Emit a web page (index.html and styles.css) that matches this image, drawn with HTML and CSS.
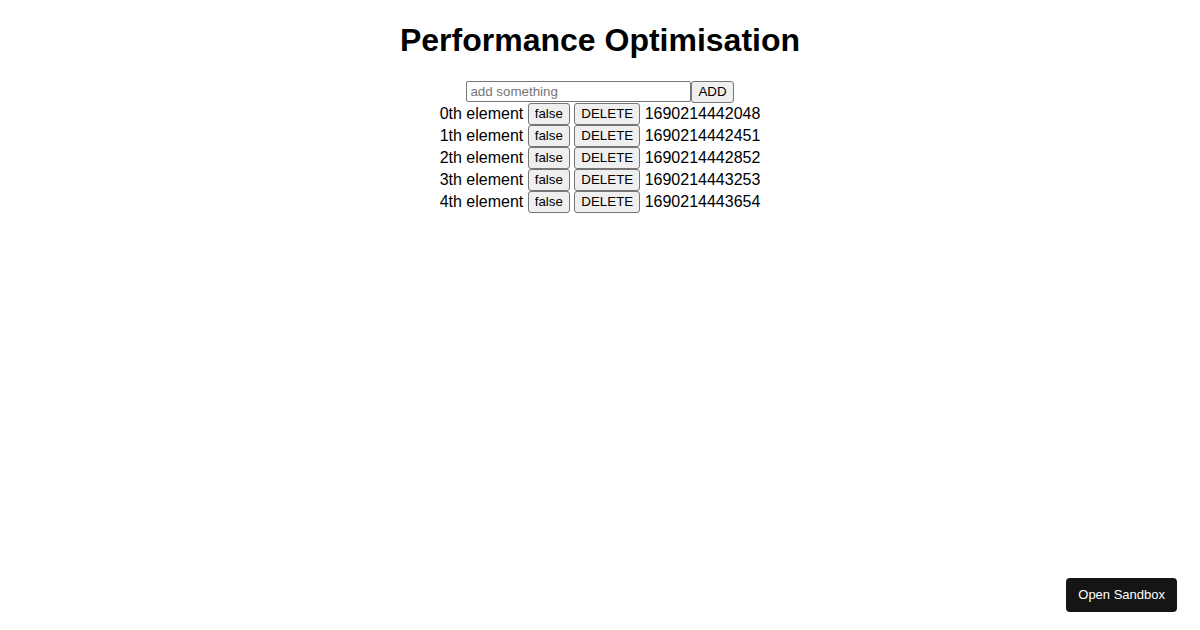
FILE: index.html
```html
<!DOCTYPE html>
<html>
<head>
<meta charset="utf-8">
<link rel="stylesheet" href="styles.css">
</head>
<body class="page">
<div class="app">
  <h1 class="title">Performance Optimisation</h1>
  <div class="adder"><input class="field" type="text" placeholder="add something"><button class="btn">ADD</button></div>
  <div class="row">0th element <button class="btn">false</button> <button class="btn">DELETE</button> 1690214442048</div>
  <div class="row">1th element <button class="btn">false</button> <button class="btn">DELETE</button> 1690214442451</div>
  <div class="row">2th element <button class="btn">false</button> <button class="btn">DELETE</button> 1690214442852</div>
  <div class="row">3th element <button class="btn">false</button> <button class="btn">DELETE</button> 1690214443253</div>
  <div class="row">4th element <button class="btn">false</button> <button class="btn">DELETE</button> 1690214443654</div>
</div>
<a class="sandbox">Open Sandbox</a>
</body>
</html>
```
FILE: styles.css
```css
.page {
  margin: 0;
  background: #fff;
  font-family: "Liberation Sans", Arial, sans-serif;
  color: #000;
}
.app {
  text-align: center;
  font-family: "Liberation Sans", Arial, sans-serif;
  font-size: 16px;
}
.title {
  font-size: 32px;
  font-weight: bold;
  margin: 22.44px 0 22px;
}
.adder {
  height: 22px;
}
.row {
  height: 22px;
  line-height: 22px;
}
.field {
  box-sizing: border-box;
  width: 225px;
  height: 21px;
  padding: 1px 3px;
  border: 1px solid #767676;
  border-radius: 2px;
  font-family: "Liberation Sans", Arial, sans-serif;
  font-size: 13.33px;
  vertical-align: top;
}
.field::placeholder {
  color: #757575;
}
.btn {
  box-sizing: border-box;
  height: 22px;
  padding: 0 6px;
  border: 1px solid #767676;
  border-radius: 3px;
  background: #efefef;
  color: #000;
  font-family: "Liberation Sans", Arial, sans-serif;
  font-size: 13.33px;
  line-height: 20px;
  vertical-align: top;
}
.sandbox {
  position: fixed;
  right: 23px;
  bottom: 18px;
  background: #151515;
  color: #fff;
  font-size: 13px;
  padding: 0 12px;
  height: 34px;
  line-height: 34px;
  border-radius: 4px;
  font-family: "Liberation Sans", Arial, sans-serif;
}
```
